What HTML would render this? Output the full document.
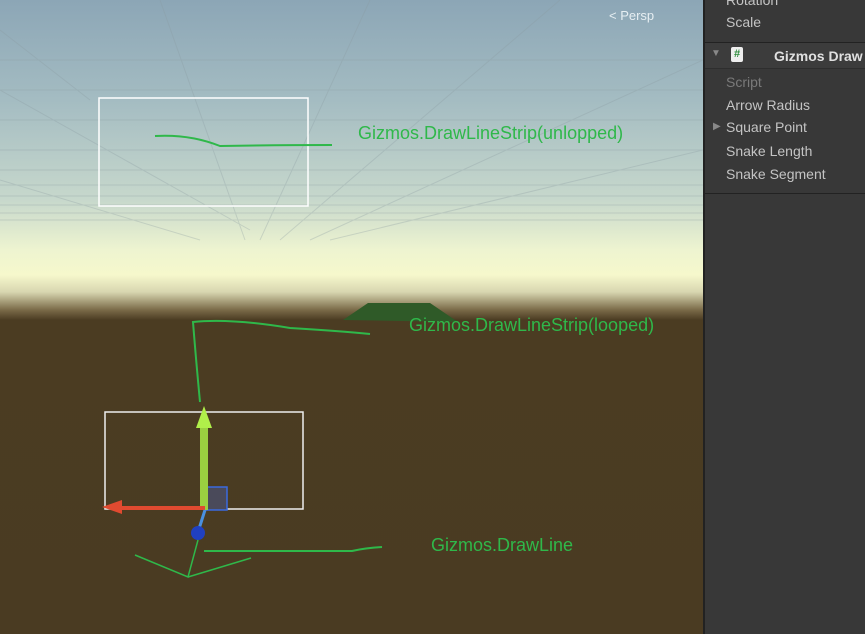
<!DOCTYPE html>
<html><head><style>
html,body{margin:0;padding:0;width:865px;height:634px;overflow:hidden;background:#383838;font-family:"Liberation Sans",sans-serif}
#scene{position:absolute;left:0;top:0;width:703px;height:634px;background:linear-gradient(#8ca6b6 0px,#a4bcc2 100px,#c7d8cc 200px,#eef4d0 250px,#f6f8cc 275px,#d8d6b0 292px,#7a6a48 310px,#4b3c22 320px,#4a3b22 634px)}
#panel{position:absolute;left:703px;top:0;width:162px;height:634px;background:#383838;border-left:2px solid #222}
.t{position:absolute;left:21px;font-size:14px;color:#c4c4c4;white-space:nowrap}
.g{position:absolute;color:#2fb84a;font-size:18px;white-space:nowrap;letter-spacing:0px}
</style></head><body>
<div id="scene">
<svg width="703" height="634" style="position:absolute;left:0;top:0">
<g stroke="#8a9aa0" stroke-width="1" opacity="0.3" fill="none">
<line x1="0" y1="90" x2="250" y2="230"/><line x1="160" y1="0" x2="245" y2="240"/>
<line x1="370" y1="0" x2="260" y2="240"/><line x1="560" y1="0" x2="280" y2="240"/>
<line x1="703" y1="60" x2="310" y2="240"/><line x1="703" y1="150" x2="330" y2="240"/>
<line x1="0" y1="180" x2="200" y2="240"/><line x1="0" y1="30" x2="90" y2="100"/>
<line x1="0" y1="120" x2="703" y2="120"/><line x1="0" y1="150" x2="703" y2="150"/>
<line x1="0" y1="170" x2="703" y2="170"/><line x1="0" y1="185" x2="703" y2="185"/>
<line x1="0" y1="196" x2="703" y2="196"/><line x1="0" y1="205" x2="703" y2="205"/>
<line x1="0" y1="213" x2="703" y2="213"/><line x1="0" y1="220" x2="703" y2="220"/>
<line x1="0" y1="90" x2="703" y2="90"/><line x1="0" y1="60" x2="703" y2="60"/>
</g>
<rect x="99" y="98" width="209" height="108" fill="none" stroke="#fff" stroke-width="1.5"/>
<path d="M155 136 Q190 134 220 146 Q280 145 332 145" stroke="#2fb84a" stroke-width="2" fill="none"/>
<polygon points="343,320 368,303 430,303 458,322" fill="#2f5a28"/>
<path d="M200 402 Q196 360 193 322 Q230 318 290 328 Q340 331 370 334" stroke="#2fb84a" stroke-width="2" fill="none"/>
<rect x="105" y="412" width="198" height="97" fill="none" stroke="#eee" stroke-width="1.5"/>
<rect x="205" y="487" width="22" height="23" fill="#4a4a5a" stroke="#3a6ae0" stroke-width="1.5"/>
<rect x="200" y="428" width="8" height="82" fill="#9ad040"/>
<polygon points="204,406 196,428 212,428" fill="#b0ef4a"/>
<line x1="120" y1="508" x2="205" y2="508" stroke="#e04a30" stroke-width="4"/>
<polygon points="102,507 122,500 122,514" fill="#e04a30"/>
<line x1="205" y1="510" x2="198" y2="532" stroke="#4a90e0" stroke-width="3"/>
<circle cx="198" cy="533" r="7" fill="#2040c0"/>
<path d="M198 540 L188 577 L135 555 M188 577 L251 558" stroke="#2fb84a" stroke-width="1.5" fill="none"/>
<path d="M204 551 L352 551 Q365 548 382 547" stroke="#2fb84a" stroke-width="2" fill="none"/>
</svg>
<div style="position:absolute;left:609px;top:8px;font-size:13px;color:#e6eef2">&lt; Persp</div>
<div class="g" style="left:358px;top:123px">Gizmos.DrawLineStrip(unlopped)</div>
<div class="g" style="left:409px;top:315px">Gizmos.DrawLineStrip(looped)</div>
<div class="g" style="left:431px;top:535px">Gizmos.DrawLine</div>
</div>
<div id="panel">
<div class="t" style="top:-8px">Rotation</div>
<div class="t" style="top:14px">Scale</div>
<div style="position:absolute;left:0;top:42px;width:162px;height:25px;background:#3c3c3c;border-top:1px solid #222;border-bottom:1px solid #2e2e2e"></div>
<div style="position:absolute;left:6px;top:48px;font-size:10px;color:#888">▼</div>
<div style="position:absolute;left:26px;top:47px;width:12px;height:15px;background:#eee;border-radius:2px;color:#2a8a3a;font-size:11px;font-weight:bold;text-align:center;line-height:15px">#</div>
<div style="position:absolute;left:69px;top:48px;font-size:14px;font-weight:bold;color:#e0e0e0;white-space:nowrap">Gizmos Draw</div>
<div class="t" style="top:74px;color:#7a7a7a">Script</div>
<div class="t" style="top:97px">Arrow Radius</div>
<div style="position:absolute;left:8px;top:121px;font-size:10px;color:#888">▶</div>
<div class="t" style="top:119px">Square Point</div>
<div class="t" style="top:143px">Snake Length</div>
<div class="t" style="top:166px">Snake Segment</div>
<div style="position:absolute;left:0;top:193px;width:162px;height:1px;background:#222"></div>
</div>
</body></html>
